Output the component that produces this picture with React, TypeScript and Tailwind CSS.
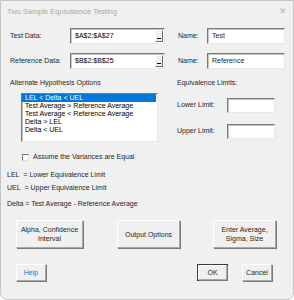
import React from "react";

const font = { fontFamily: '"Liberation Sans", Arial, sans-serif' };

function Sunken({ className = "", children }: { className?: string; children?: React.ReactNode }) {
  return (
    <div
      className={`bg-white border border-t-[#7a7a7a] border-l-[#7a7a7a] border-b-[#e8e8e8] border-r-[#e8e8e8] shadow-[inset_1px_1px_0_#c4c4c4] ${className}`}
    >
      {children}
    </div>
  );
}

function Btn({ className = "", children, def = false }: { className?: string; children?: React.ReactNode; def?: boolean }) {
  return (
    <div className={`${def ? "border border-[#3c3c3c]" : ""} ${className}`}>
      <div className="h-full w-full bg-[#f0f0f0] border border-t-white border-l-white border-b-[#a8a8a8] border-r-[#a8a8a8] shadow-[1px_1px_0_#7a7a7a] flex items-center justify-center text-center leading-[9px]">
        {children}
      </div>
    </div>
  );
}

function RefInput({ value }: { value: string }) {
  return (
    <Sunken className="w-[95px] h-[16px] flex items-stretch">
      <div className="flex-1 flex items-center pl-[4px] text-[7px] text-black">{value}</div>
      <div className="w-[8px] my-[1px] mr-[1px] bg-[#f0f0f0] border border-t-white border-l-white border-b-[#6e6e6e] border-r-[#6e6e6e] flex items-end justify-center pb-[2px]">
        <div className="w-[4px] h-[1px] bg-black" />
      </div>
    </Sunken>
  );
}

export default function App() {
  const items = [
    "LEL < Delta < UEL",
    "Test Average > Reference Average",
    "Test Average < Reference Average",
    "Delta > LEL",
    "Delta < UEL",
  ];
  return (
    <div style={font} className="w-[294px] h-[300px] bg-[#f0f0f0] border border-[#c4c4c4] rounded-b-[7px] overflow-hidden text-[7px] text-[#262626]">
      <div className="h-[21px] flex items-center justify-between pl-[6px] pr-[6px] text-[#a8a8a8]">
        <span className="text-[7.5px]">Two Sample Equivalence Testing</span>
        <span className="text-[9px] leading-none font-light text-[#b4b4b4]">✕</span>
      </div>

      <div className="mt-[6px] h-[16px] flex items-center pl-[9px]">
        <div className="w-[60px]">Test Data:</div>
        <RefInput value="$A$2:$A$27" />
        <div className="ml-[13px] w-[29px]">Name:</div>
        <Sunken className="w-[78px] h-[16px] flex items-center pl-[4px]">Test</Sunken>
      </div>
      <div className="mt-[9px] h-[16px] flex items-center pl-[9px]">
        <div className="w-[60px]">Reference Data:</div>
        <RefInput value="$B$2:$B$25" />
        <div className="ml-[13px] w-[29px]">Name:</div>
        <Sunken className="w-[78px] h-[16px] flex items-center pl-[4px]">Reference</Sunken>
      </div>

      <div className="mt-[9px] flex pl-[9px]">
        <div className="w-[167px]">
          <div className="h-[10px] flex items-center">Alternate Hypothesis Options</div>
          <Sunken className="mt-[5px] ml-[11px] w-[137px] h-[49px]">
            <div className="flex flex-col">
              {items.map((t, i) => (
                <div
                  key={t}
                  className={`h-[8px] leading-[8px] pl-[3px] mr-[1px] ${i === 0 ? "bg-[#0078d7] text-white" : "text-black"}`}
                >
                  {t}
                </div>
              ))}
            </div>
          </Sunken>
        </div>
        <div>
          <div className="h-[10px] flex items-center">Equivalence Limits:</div>
          <div className="mt-[10px] h-[15px] flex items-center">
            <div className="w-[50px]">Lower Limit:</div>
            <Sunken className="w-[48px] h-[15px]" />
          </div>
          <div className="mt-[11px] h-[15px] flex items-center">
            <div className="w-[50px]">Upper Limit:</div>
            <Sunken className="w-[48px] h-[15px]" />
          </div>
        </div>
      </div>

      <div className="mt-[10px] h-[10px] flex items-center pl-[21px]">
        <div className="w-[7px] h-[7px] bg-white border border-t-[#7a7a7a] border-l-[#7a7a7a] border-b-[#e0e0e0] border-r-[#e0e0e0]" />
        <span className="ml-[4px]">Assume the Variances are Equal</span>
      </div>

      <div className="mt-[8px] h-[10px] flex items-center pl-[6px]">LEL&nbsp; = Lower Equivalence Limit</div>
      <div className="mt-[3px] h-[10px] flex items-center pl-[6px]">UEL&nbsp; = Upper Equivalence Limit</div>
      <div className="mt-[6px] h-[10px] flex items-center pl-[6px]">Delta = Test Average - Reference Average</div>

      <div className="mt-[11px] h-[28px] flex pl-[15px]">
        <Btn className="w-[67px] h-[28px]">Alpha, Confidence<br />Interval</Btn>
        <Btn className="ml-[34px] w-[63px] h-[28px]">Output Options</Btn>
        <Btn className="ml-[33px] w-[63px] h-[28px]">Enter Average,<br />Sigma, Size</Btn>
      </div>

      <div className="mt-[16px] h-[17px] flex pl-[15px]">
        <Btn className="w-[30px] h-[17px]"><span className="text-[#2a6fd6]">Help</span></Btn>
        <Btn def className="ml-[151px] w-[31px] h-[17px]">OK</Btn>
        <Btn className="ml-[14px] w-[30px] h-[17px]">Cancel</Btn>
      </div>
    </div>
  );
}
